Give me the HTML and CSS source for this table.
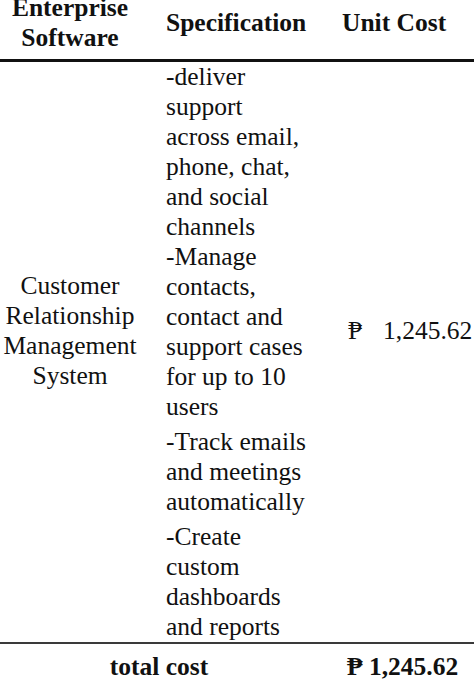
FILE: index.html
```html
<!DOCTYPE html>
<html>
<head>
<meta charset="utf-8">
<link rel="stylesheet" href="styles.css">
</head>
<body>
<div class="sheet">
  <div class="row head">
    <div class="c1">Enterprise Software</div>
    <div class="c2">Specification</div>
    <div class="c3">Unit Cost</div>
  </div>
  <div class="row body">
    <div class="c1 mid">Customer Relationship Management System</div>
    <div class="c2 specs">
      <p>-deliver support across email, phone, chat, and social channels<br>-Manage contacts, contact and support cases for up to 10 users</p>
      <p>-Track emails and meetings automatically</p>
      <p>-Create custom dashboards and reports</p>
    </div>
    <div class="c3 mid price"><span class="peso">₱</span><span class="amt">1,245.62</span></div>
  </div>
  <div class="row foot">
    <div class="span12">total cost</div>
    <div class="c3 total">₱ 1,245.62</div>
  </div>
</div>
</body>
</html>
```

FILE: styles.css
```css
html, body {
  margin: 0;
  padding: 0;
  background: #ffffff;
}
body {
  width: 474px;
  height: 684px;
  overflow: hidden;
  font-family: "Liberation Serif", "DejaVu Serif", serif;
  font-size: 25.5px;
  line-height: 30px;
  color: #111111;
}
.sheet {
  margin-top: -7px;
  width: 520px;
}
.row {
  display: grid;
  grid-template-columns: 140px 178px 202px;
}
.head {
  font-weight: bold;
  align-items: center;
  padding-bottom: 6px;
  border-bottom: 3px solid #111111;
}
.c1 {
  text-align: center;
}
.c2 {
  padding-left: 26px;
  padding-right: 8px;
}
.head .c3 {
  padding-left: 24px;
}
.mid {
  align-self: center;
  padding-bottom: 43px;
}
.specs {
  display: flex;
  flex-direction: column;
  gap: 5px;
}
.specs p {
  margin: 0;
}
.body {
  border-bottom: 2px solid #3a3a3a;
}
.price {
  display: flex;
  align-items: baseline;
  padding-left: 30px;
}
.peso {
  width: 35px;
}
.foot {
  padding-top: 8px;
  font-weight: bold;
}
.span12 {
  grid-column: 1 / 3;
  text-align: center;
}
.total {
  padding-left: 29px;
}
```
